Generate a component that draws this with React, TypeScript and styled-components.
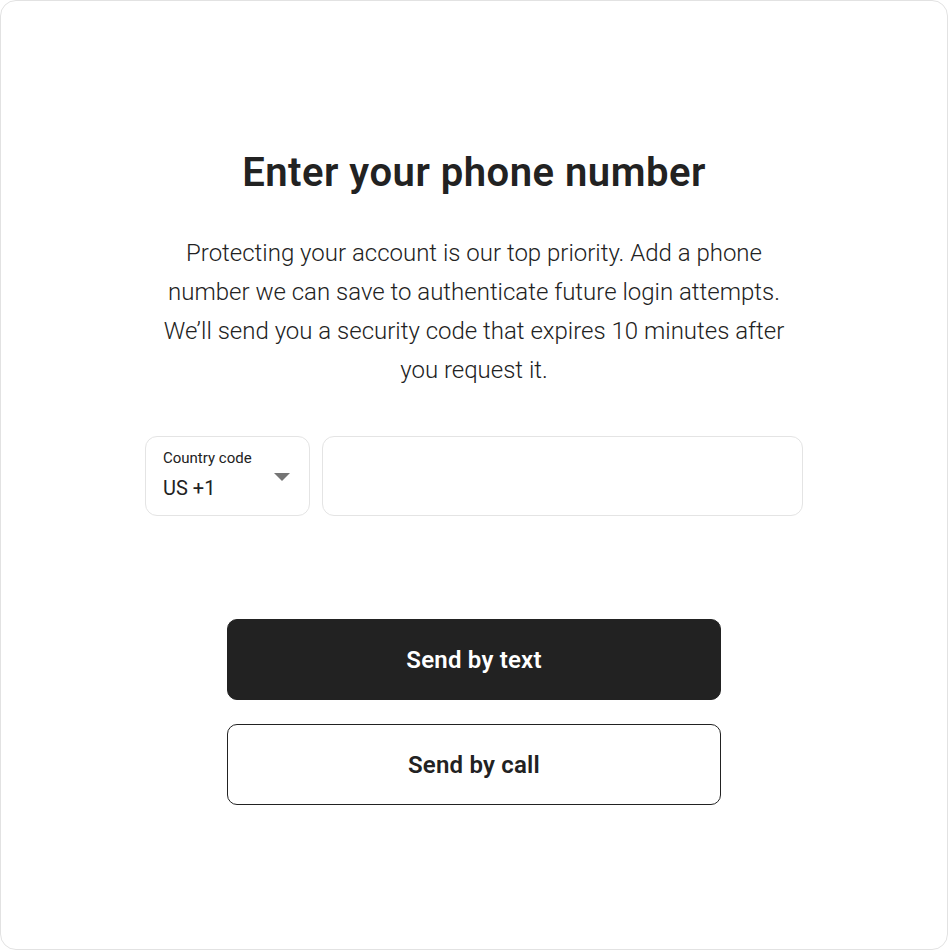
import React from "react";
import styled, { createGlobalStyle } from "styled-components";

const Global = createGlobalStyle`
  html, body { margin: 0; padding: 0; background: #fff; }
  body { font-family: Roboto, "Noto Sans", sans-serif; color: #222; }
  * { box-sizing: border-box; }
`;

const Card = styled.div`
  width: 948px;
  height: 950px;
  border: 1px solid #e2e2e2;
  border-radius: 16px;
  background: #fff;
  display: flex;
  flex-direction: column;
  align-items: center;
  padding-top: 148px;
`;

const Title = styled.h1`
  margin: 0;
  font-size: 40px;
  line-height: 48px;
  font-weight: 600;
  letter-spacing: 0.5px;
  color: #222;
`;

const Lead = styled.p`
  margin: 37px 0 0;
  width: 640px;
  text-align: center;
  font-size: 24px;
  line-height: 39px;
  font-weight: 300;
  color: #222;
`;

const Fields = styled.div`
  margin-top: 46px;
  display: flex;
  gap: 12px;
`;

const Select = styled.div`
  position: relative;
  width: 165px;
  height: 80px;
  border: 1px solid #e4e4e4;
  border-radius: 12px;
  padding: 12px 17px;
  display: flex;
  flex-direction: column;
`;

const SelectLabel = styled.span`
  font-size: 15px;
  line-height: 18px;
  color: #222;
`;

const SelectValue = styled.span`
  margin-top: 8px;
  font-size: 20px;
  line-height: 26px;
  color: #222;
`;

const Caret = styled.span`
  position: absolute;
  right: 19px;
  top: 36px;
  width: 0;
  height: 0;
  border-left: 8px solid transparent;
  border-right: 8px solid transparent;
  border-top: 8px solid #757575;
`;

const PhoneInput = styled.input`
  width: 481px;
  height: 80px;
  border: 1px solid #e4e4e4;
  border-radius: 12px;
  padding: 0 17px;
  font-size: 20px;
  font-family: inherit;
  outline: none;
`;

const Buttons = styled.div`
  margin-top: 103px;
  display: flex;
  flex-direction: column;
  gap: 24px;
`;

const Button = styled.button<{ $primary?: boolean }>`
  width: 494px;
  height: 81px;
  border-radius: 10px;
  border: 1px solid #222;
  background: ${(p) => (p.$primary ? "#222" : "#fff")};
  color: ${(p) => (p.$primary ? "#fff" : "#222")};
  font-family: inherit;
  font-size: 24px;
  font-weight: 600;
  letter-spacing: 0.2px;
  cursor: pointer;
`;

export default function App() {
  return (
    <>
      <Global />
      <Card>
        <Title>Enter your phone number</Title>
        <Lead>
          Protecting your account is our top priority. Add a phone number we can save to
          authenticate future login attempts. We’ll send you a security code that expires 10
          minutes after you request it.
        </Lead>
        <Fields>
          <Select>
            <SelectLabel>Country code</SelectLabel>
            <SelectValue>US +1</SelectValue>
            <Caret />
          </Select>
          <PhoneInput type="tel" aria-label="Phone number" />
        </Fields>
        <Buttons>
          <Button $primary>Send by text</Button>
          <Button>Send by call</Button>
        </Buttons>
      </Card>
    </>
  );
}
